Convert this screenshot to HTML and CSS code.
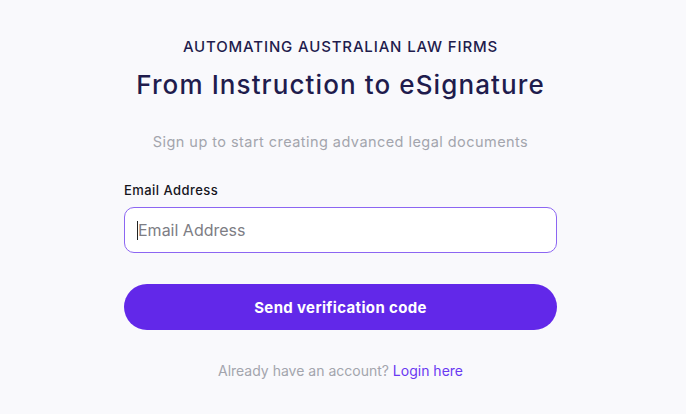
FILE: index.html
```html
<!DOCTYPE html>
<html lang="en">
<head>
<meta charset="utf-8">
<title>Sign up</title>
<link rel="stylesheet" href="styles.css">
</head>
<body>
<main class="page">
  <section class="card">
    <p class="eyebrow">AUTOMATING AUSTRALIAN LAW FIRMS</p>
    <h1 class="title">From Instruction to eSignature</h1>
    <p class="subtitle">Sign up to start creating advanced legal documents</p>
    <form class="form">
      <label class="label" for="email">Email Address</label>
      <div class="input">
        <span class="caret"></span><span class="placeholder">Email Address</span>
      </div>
      <button class="btn" type="button">Send verification code</button>
    </form>
    <p class="footer">Already have an account? <a class="link" href="#">Login here</a></p>
  </section>
</main>
</body>
</html>
```
FILE: styles.css
```css
* { box-sizing: border-box; }
html, body { margin: 0; padding: 0; }
body {
  background: #f9f9fc;
  font-family: "Inter", "Open Sans", sans-serif;
  width: 686px;
  height: 414px;
  overflow: hidden;
}
.page {
  display: flex;
  justify-content: center;
  padding-top: 37px;
  padding-right: 5px;
}
.card {
  width: 433px;
  display: flex;
  flex-direction: column;
  align-items: center;
}
.eyebrow {
  margin: 0;
  font-size: 15px;
  line-height: 20px;
  font-weight: 500;
  color: #1f1c4d;
  letter-spacing: 0.85px;
}
.title {
  margin: 11px 0 0;
  font-size: 26px;
  line-height: 34px;
  font-weight: 500;
  color: #1f1c4d;
  letter-spacing: 1.1px;
}
.subtitle {
  margin: 30px 0 0;
  font-size: 14.5px;
  line-height: 20px;
  color: #a3a5ad;
  letter-spacing: 0.45px;
}
.form {
  width: 100%;
  margin-top: 29px;
  display: flex;
  flex-direction: column;
}
.label {
  font-size: 13px;
  line-height: 18px;
  font-weight: 500;
  color: #16151c;
  letter-spacing: 0.45px;
}
.input {
  margin-top: 8px;
  height: 46px;
  background: #fff;
  border: 1px solid #8c66f2;
  border-radius: 10px;
  display: flex;
  align-items: center;
  padding-left: 12px;
}
.caret {
  width: 1px;
  height: 19px;
  background: #222;
}
.placeholder {
  font-size: 16px;
  color: #7d7d84;
}
.btn {
  margin-top: 31px;
  height: 46px;
  border: none;
  border-radius: 23px;
  background: #6228e9;
  color: #fff;
  font-family: inherit;
  font-size: 15px;
  font-weight: 700;
  letter-spacing: 0.35px;
}
.footer {
  margin: 31px 0 0;
  font-size: 14px;
  line-height: 20px;
  color: #a3a5ad;
}
.link {
  color: #6a39f2;
  text-decoration: none;
}
```
